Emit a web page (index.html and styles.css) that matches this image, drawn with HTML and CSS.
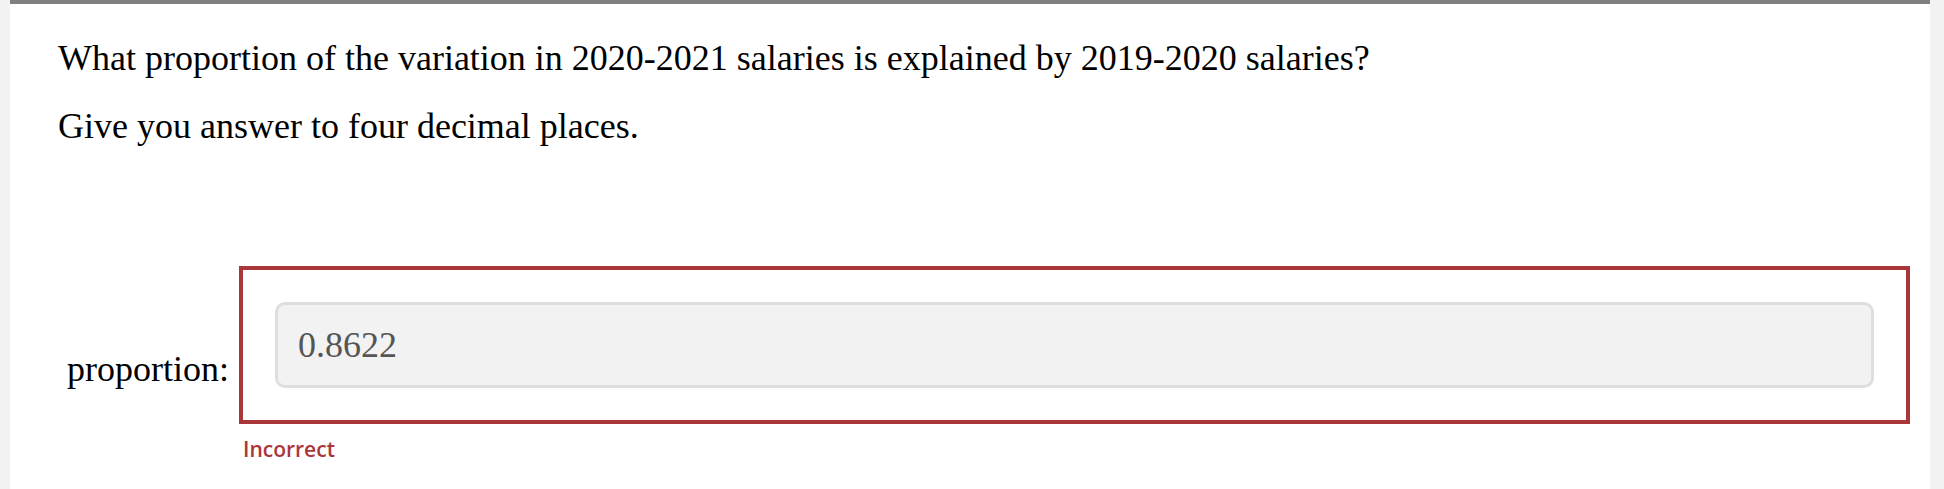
FILE: index.html
```html
<!DOCTYPE html>
<html lang="en">

<head>
    <meta charset="UTF-8">
    <title>Question</title>
    <link rel="stylesheet" href="styles.css">
</head>

<body>
    <div class="question">
        <p>What proportion of the variation in 2020-2021 salaries is explained by 2019-2020 salaries?</p>
        <p>Give you answer to four decimal places.</p>

        <div class="answer">
            <label class="answer-label" for="proportion">proportion:</label>
            <div class="answer-box incorrect">
                <input type="text" id="proportion" class="answer-input" value="0.8622" readonly>
            </div>
            <div class="feedback">Incorrect</div>
        </div>
    </div>
</body>

</html>
```

FILE: styles.css
```css
* {
    box-sizing: border-box;
}

html,
body {
    margin: 0;
    padding: 0;
    height: 100%;
    background: #f2f2f2;
}

.question {
    min-height: 100%;
    margin: 0 14px 0 10px;
    padding: 0 20px 0 48px;
    background: #fff;
    border-top: 4px solid #808080;
    font-family: "Liberation Serif", "Times New Roman", serif;
    font-size: 36px;
    line-height: 40px;
    color: #000;
}

.question p {
    margin: 28px 0;
}

.question p:first-child {
    margin-top: 34px;
}

/* label on the left, red-framed field and feedback stacked on the right */
.answer {
    display: grid;
    grid-template-columns: auto 1fr;
    column-gap: 10px;
    margin-top: 120px;
    padding-left: 9px;
}

.answer-label {
    grid-column: 1;
    grid-row: 1;
    align-self: end;
    margin-bottom: 35px;
}

.answer-box {
    grid-column: 2;
    grid-row: 1;
    padding: 32px;
    border: 4px solid #a93638;
}

.answer-input {
    display: block;
    width: 100%;
    height: 86px;
    padding: 0 20px;
    border: 3px solid #dedede;
    border-radius: 10px;
    background: #f2f2f2;
    font-family: "Liberation Serif", "Times New Roman", serif;
    font-size: 36px;
    color: #555;
    outline: none;
}

.feedback {
    grid-column: 2;
    grid-row: 2;
    margin-top: 11px;
    padding-left: 4px;
    font-family: "Open Sans", sans-serif;
    font-weight: 600;
    font-size: 21px;
    line-height: 28px;
    color: #ab363a;
}
```
